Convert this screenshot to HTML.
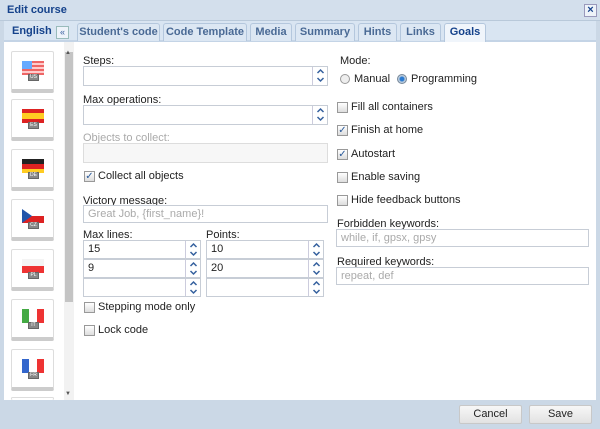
<!DOCTYPE html><html><head><style>
*{box-sizing:border-box}
body{margin:0;width:600px;height:429px;overflow:hidden;background:#cbd8e6;font-family:"Liberation Sans",sans-serif;font-size:11px;color:#222;position:relative}
.a{position:absolute}
.title{left:0;top:0;width:600px;height:21px;background:#d3dfec;border-bottom:1px solid #b9c9da}
.title span{position:absolute;left:7px;top:4px;font-weight:bold;color:#15428b;font-size:11px}
.x{right:3px;top:4px;width:13px;height:13px;border:1px solid #99b;background:#eef3f9;color:#15428b;font-size:11px;line-height:10px;text-align:center;font-weight:bold}
.strip{left:4px;top:21px;width:592px;height:22px;background:#d9e5f2;border-bottom:3px solid #c4d4e6}
.tab{top:23px;height:18px;background:#dce7f3;border:1px solid #b4c7dd;border-bottom:none;border-radius:3px 3px 0 0;color:#4a6a95;font-weight:bold;font-size:11px;text-align:center;line-height:16px}
.main{left:74px;top:42px;width:522px;height:358px;background:#fff}
.left{left:4px;top:42px;width:70px;height:358px;background:#fff}
.sb{left:64px;top:42px;width:10px;height:358px;background:#f2f2f2}
.fb{left:11px;width:43px;height:42px;background:#fff;border:1px solid #ddd;border-bottom:4px solid #ccc;border-radius:2px}
.fl{position:absolute;left:10px;top:9px;width:22px;height:14px}
.tag{position:absolute;left:16px;top:22px;width:11px;height:7px;background:#888;border:1px solid #666;color:#fff;font-size:5px;line-height:5px;text-align:center}
.lbl{font-size:11px;color:#222}
.inp{border:1px solid #c7cdd6;background:#fff;height:19px;font-size:11px;padding:2px 4px}
.ph{color:#aaa}
.sp{width:15px;border-left:1px solid #ccd;background:#fff}
.sp svg{display:block;margin:1px auto 0}
.cb{width:11px;height:11px;border:1px solid #999;background:linear-gradient(#fff,#ddd);font-size:10px;line-height:9px;color:#2a5a9a;text-align:center}
.btn{top:405px;height:19px;width:63px;background:linear-gradient(#f7f7f7,#e2e2e2);border:1px solid #c8c8c8;border-radius:2px;text-align:center;line-height:17px;font-size:11px}
</style></head><body>
<div class="a title"><span>Edit course</span></div>
<div class="a x">×</div>
<div class="a strip"></div>
<div class="a" style="left:12px;top:25px;font-weight:bold;color:#15428b;font-size:11px">English</div>
<div class="a" style="left:56px;top:26px;width:13px;height:13px;background:#eef3fa;border:1px solid #9bb;color:#3a60a0;font-size:9px;line-height:11px;text-align:center">«</div>
<div class="a tab" style="left:77px;width:83px">Student's code</div>
<div class="a tab" style="left:163px;width:84px">Code Template</div>
<div class="a tab" style="left:250px;width:42px">Media</div>
<div class="a tab" style="left:295px;width:60px">Summary</div>
<div class="a tab" style="left:358px;width:39px">Hints</div>
<div class="a tab" style="left:400px;width:41px">Links</div>
<div class="a tab" style="left:444px;width:42px;background:#f0f5fb;color:#15428b;height:20px">Goals</div>
<div class="a left"></div><div class="a main"></div>
<div class="a sb"><div style="position:absolute;left:1px;top:10px;width:8px;height:250px;background:#c4c4c4"></div></div>
<div class="a" style="left:65px;top:50px;font-size:6px;color:#555">▲</div>
<div class="a" style="left:65px;top:391px;font-size:6px;color:#555">▼</div>

<div class="a fb" style="top:51px"><div class="fl" style="background:repeating-linear-gradient(#e66 0 2px,#fcc 2px 4px)"><div style="width:10px;height:8px;background:#6af"></div></div><div class="tag">US</div></div>
<div class="a fb" style="top:99px"><div class="fl" style="background:linear-gradient(#d22 0 4px,#fc2 4px 10px,#d22 10px)"></div><div class="tag">ES</div></div>
<div class="a fb" style="top:149px"><div class="fl" style="background:linear-gradient(#222 0 5px,#d22 5px 10px,#fc2 10px)"></div><div class="tag">DE</div></div>
<div class="a fb" style="top:199px"><div class="fl" style="background:linear-gradient(#fff 0 7px,#d22 7px)"><div style="width:0;height:0;border-left:10px solid #25a;border-top:7px solid transparent;border-bottom:7px solid transparent"></div></div><div class="tag">CZ</div></div>
<div class="a fb" style="top:249px"><div class="fl" style="background:linear-gradient(#f4f4f4 0 7px,#e33 7px)"></div><div class="tag">PL</div></div>
<div class="a fb" style="top:299px"><div class="fl" style="background:linear-gradient(90deg,#4a4 0 7px,#fff 7px 15px,#e33 15px)"></div><div class="tag">IT</div></div>
<div class="a fb" style="top:349px"><div class="fl" style="background:linear-gradient(90deg,#36c 0 7px,#fff 7px 15px,#e33 15px)"></div><div class="tag">FR</div></div>
<div class="a fb" style="top:397px;height:3px;border-bottom:none"></div>

<div class="a lbl" style="left:83px;top:55px">Steps:</div>
<div class="a inp" style="left:83px;top:66px;width:245px;height:20px"></div>
<div class="a sp" style="left:312px;top:67px;height:18px"><svg width="9" height="16"><path d="M1.5 5L4.5 2L7.5 5M1.5 10L4.5 13L7.5 10" fill="none" stroke="#34609e" stroke-width="1.5"/></svg></div>
<div class="a lbl" style="left:83px;top:94px">Max operations:</div>
<div class="a inp" style="left:83px;top:105px;width:245px;height:20px"></div>
<div class="a sp" style="left:312px;top:106px;height:18px"><svg width="9" height="16"><path d="M1.5 5L4.5 2L7.5 5M1.5 10L4.5 13L7.5 10" fill="none" stroke="#34609e" stroke-width="1.5"/></svg></div>
<div class="a lbl" style="left:83px;top:132px;color:#aaa">Objects to collect:</div>
<div class="a inp" style="left:83px;top:143px;width:245px;height:20px;background:#f7f7f7;border-color:#ddd"></div>
<div class="a cb" style="left:84px;top:171px">✓</div><div class="a lbl" style="left:98px;top:170px">Collect all objects</div>
<div class="a lbl" style="left:83px;top:195px">Victory message:</div>
<div class="a inp ph" style="left:83px;top:205px;width:245px;height:18px;padding-top:2px">Great Job, {first_name}!</div>
<div class="a lbl" style="left:83px;top:229px">Max lines:</div>
<div class="a lbl" style="left:206px;top:229px">Points:</div>
<div class="a inp" style="left:83px;top:240px;width:118px">15</div>
<div class="a inp" style="left:83px;top:259px;width:118px">9</div>
<div class="a inp" style="left:83px;top:278px;width:118px"></div>
<div class="a inp" style="left:206px;top:240px;width:118px">10</div>
<div class="a inp" style="left:206px;top:259px;width:118px">20</div>
<div class="a inp" style="left:206px;top:278px;width:118px"></div>
<div class="a sp" style="left:185px;top:241px;height:17px"><svg width="9" height="16"><path d="M1.5 5L4.5 2L7.5 5M1.5 10L4.5 13L7.5 10" fill="none" stroke="#34609e" stroke-width="1.5"/></svg></div>
<div class="a sp" style="left:185px;top:260px;height:17px"><svg width="9" height="16"><path d="M1.5 5L4.5 2L7.5 5M1.5 10L4.5 13L7.5 10" fill="none" stroke="#34609e" stroke-width="1.5"/></svg></div>
<div class="a sp" style="left:185px;top:279px;height:17px"><svg width="9" height="16"><path d="M1.5 5L4.5 2L7.5 5M1.5 10L4.5 13L7.5 10" fill="none" stroke="#34609e" stroke-width="1.5"/></svg></div>
<div class="a sp" style="left:308px;top:241px;height:17px"><svg width="9" height="16"><path d="M1.5 5L4.5 2L7.5 5M1.5 10L4.5 13L7.5 10" fill="none" stroke="#34609e" stroke-width="1.5"/></svg></div>
<div class="a sp" style="left:308px;top:260px;height:17px"><svg width="9" height="16"><path d="M1.5 5L4.5 2L7.5 5M1.5 10L4.5 13L7.5 10" fill="none" stroke="#34609e" stroke-width="1.5"/></svg></div>
<div class="a sp" style="left:308px;top:279px;height:17px"><svg width="9" height="16"><path d="M1.5 5L4.5 2L7.5 5M1.5 10L4.5 13L7.5 10" fill="none" stroke="#34609e" stroke-width="1.5"/></svg></div>
<div class="a cb" style="left:84px;top:302px"></div><div class="a lbl" style="left:98px;top:301px">Stepping mode only</div>
<div class="a cb" style="left:84px;top:325px"></div><div class="a lbl" style="left:98px;top:324px">Lock code</div>

<div class="a lbl" style="left:340px;top:55px">Mode:</div>
<div class="a" style="left:340px;top:74px;width:10px;height:10px;border-radius:50%;border:1px solid #999;background:#eee"></div>
<div class="a lbl" style="left:354px;top:73px">Manual</div>
<div class="a" style="left:397px;top:74px;width:10px;height:10px;border-radius:50%;border:1px solid #789;background:radial-gradient(#2a7ad0 0 2px,#bcd 3px)"></div>
<div class="a lbl" style="left:411px;top:73px">Programming</div>
<div class="a cb" style="left:337px;top:102px"></div><div class="a lbl" style="left:351px;top:101px">Fill all containers</div>
<div class="a cb" style="left:337px;top:125px">✓</div><div class="a lbl" style="left:351px;top:124px">Finish at home</div>
<div class="a cb" style="left:337px;top:149px">✓</div><div class="a lbl" style="left:351px;top:148px">Autostart</div>
<div class="a cb" style="left:337px;top:172px"></div><div class="a lbl" style="left:351px;top:171px">Enable saving</div>
<div class="a cb" style="left:337px;top:195px"></div><div class="a lbl" style="left:351px;top:194px">Hide feedback buttons</div>
<div class="a lbl" style="left:337px;top:218px">Forbidden keywords:</div>
<div class="a inp ph" style="left:336px;top:229px;width:253px;height:18px">while, if, gpsx, gpsy</div>
<div class="a lbl" style="left:337px;top:256px">Required keywords:</div>
<div class="a inp ph" style="left:336px;top:267px;width:253px;height:18px">repeat, def</div>

<div class="a btn" style="left:459px">Cancel</div>
<div class="a btn" style="left:529px">Save</div>
</body></html>
